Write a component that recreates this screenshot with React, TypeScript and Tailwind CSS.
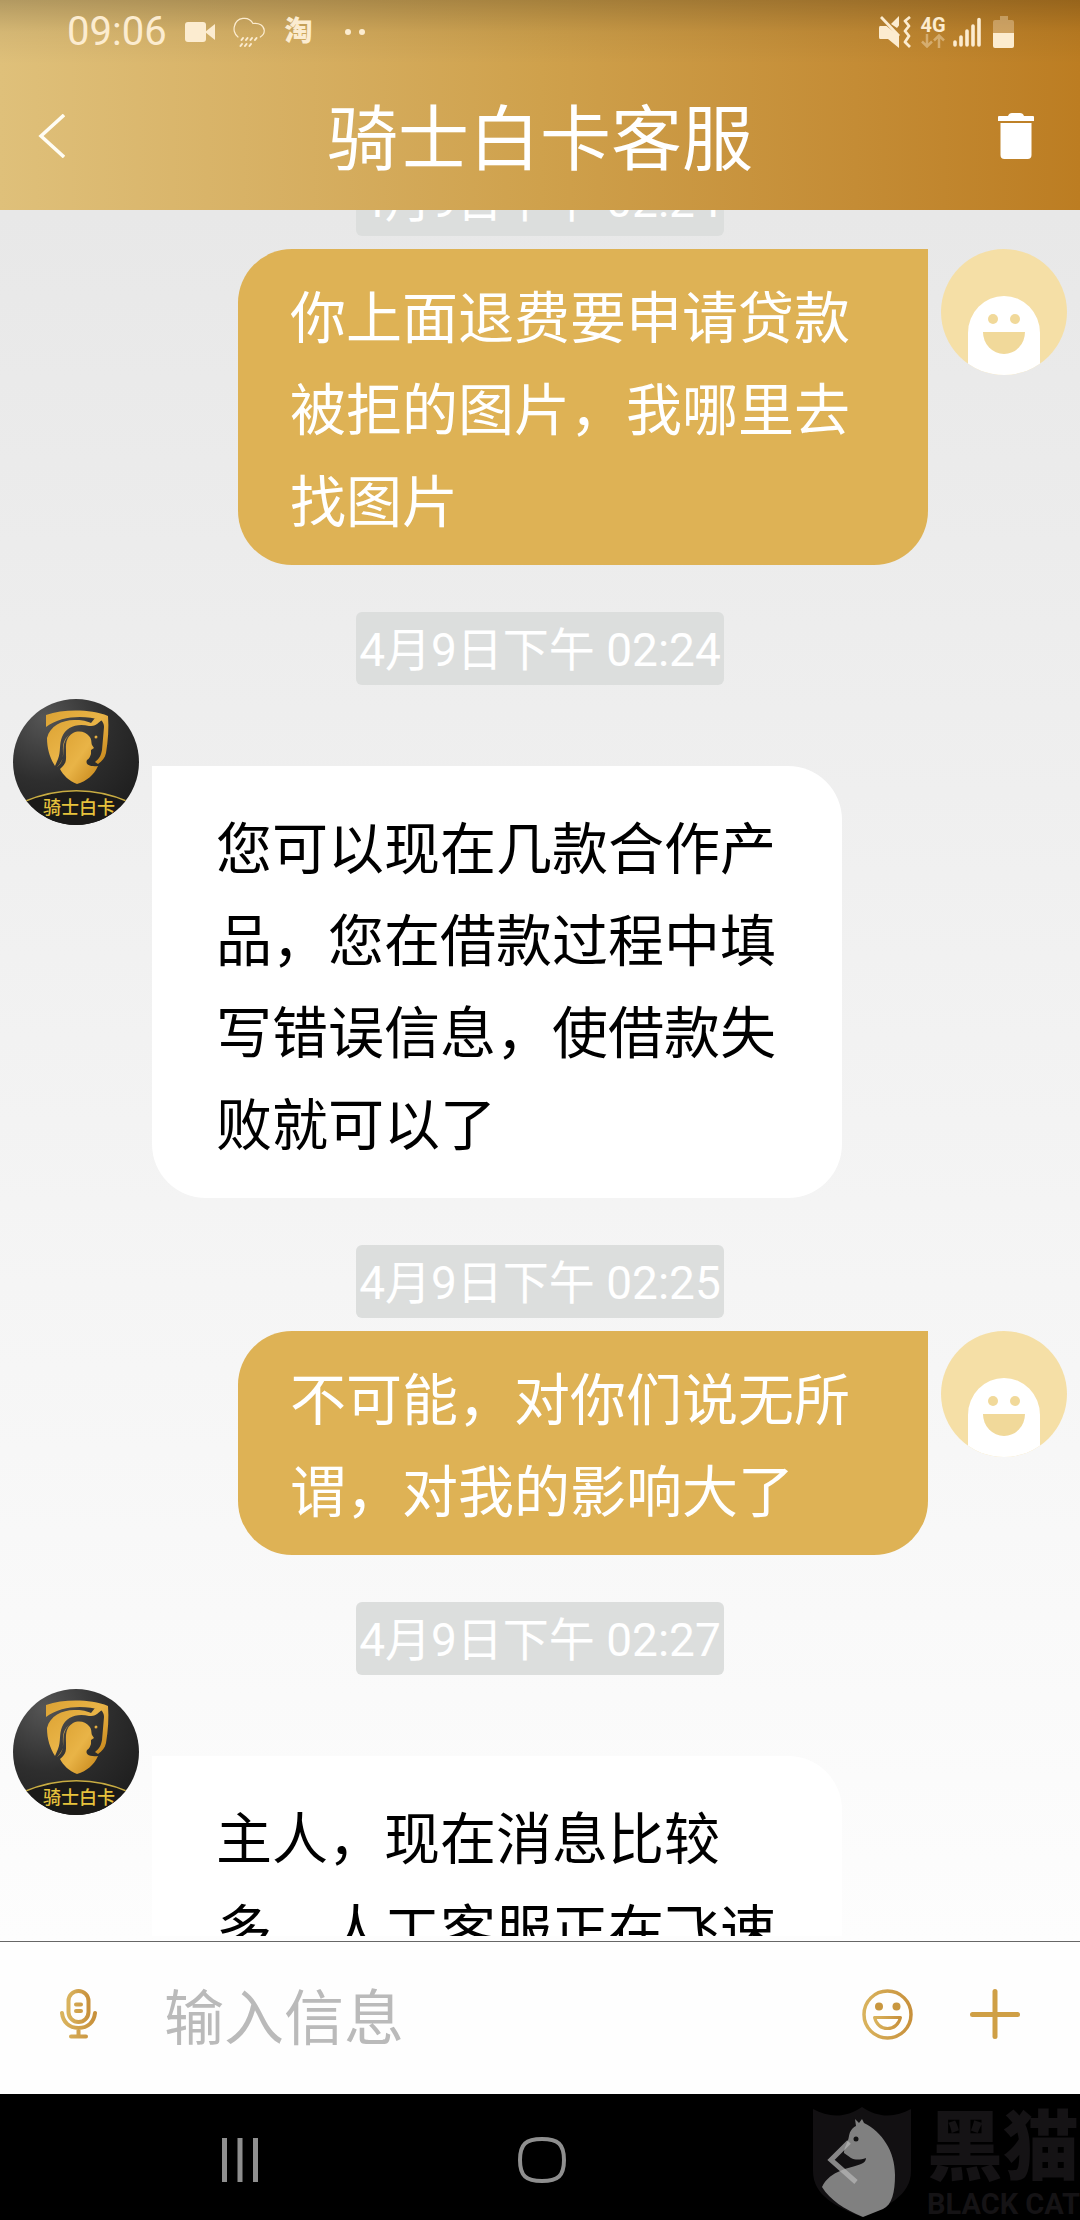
import React from 'react';

type Message = {
  id: number;
  from: 'agent' | 'user';
  time: string;
  text: string;
};

const messages: Message[] = [
  { id: 1, from: 'user', time: '4月9日下午 02:24', text: '你上面退费要申请贷款被拒的图片，我哪里去找图片' },
  { id: 2, from: 'agent', time: '4月9日下午 02:24', text: '您可以现在几款合作产品，您在借款过程中填写错误信息，使借款失败就可以了' },
  { id: 3, from: 'user', time: '4月9日下午 02:25', text: '不可能，对你们说无所谓，对我的影响大了' },
  { id: 4, from: 'agent', time: '4月9日下午 02:27', text: '主人，现在消息比较多，人工客服正在飞速' },
];

const StatusBar = () => (
  <div className="flex h-16 items-center justify-between bg-linear-to-b from-black/20 via-black/5 to-transparent pr-[66px] pl-[67px] text-[#fcecd0]">
    <div className="flex items-center">
      <span className="text-[40px] leading-10">09:06</span>
      <svg className="ml-[18px] w-[30px]" viewBox="0 0 30 20" fill="currentColor">
        <rect width="21" height="20" rx="3" />
        <path d="M20 10 30 2v16z" />
      </svg>
      <svg className="ml-[18px] w-8" viewBox="0 0 32 31" fill="none" stroke="currentColor" strokeLinecap="round">
        <path d="M5 20C1 17 .5 12 1.500 9A10 10 0 0 1 20 6.500c6-1 11 2 11.300 7 0 3-1.500 5-4 6.500" strokeWidth="1.200" />
        <path d="m10 21-1.500 2m6-2L13 23m6-2-1.500 2m6-2L22 23M9 27l-1.500 2m6-2L12 29m6-2-1.500 2" strokeWidth="2" />
      </svg>
      <span className="ml-5 text-[28px] leading-8 font-black">淘</span>
      <svg className="ml-8 w-5" viewBox="0 0 20 6" fill="currentColor">
        <circle cx="3" cy="3" r="3" />
        <circle cx="17" cy="3" r="3" />
      </svg>
    </div>
    <div className="flex items-center">
      <svg className="w-8" viewBox="0 0 32 32" fill="currentColor">
        <path d="M1 10h6.500L20 20v12L9 23H1q-1 0-1-2v-9q0-2 1-2zM12 8l8-8v9.500L18 12z" />
        <path d="m2 1 18 19" fill="none" stroke="currentColor" strokeWidth="2.800" />
        <path d="m31 1-5 4 4 5-4 5 4 5-4 6 5 5" fill="none" stroke="currentColor" strokeWidth="2.800" strokeLinejoin="round" />
      </svg>
      <div className="ml-[10px] flex w-6 flex-col items-center">
        <span className="text-[20px] leading-[18px] font-bold">4G</span>
        <svg className="w-6 opacity-40" viewBox="0 0 24 14" fill="none" stroke="currentColor" strokeWidth="2.500">
          <path d="M6 0v12M1 7.500l5 5 5-5M18 14V2M13 6.500l5-5 5 5" />
        </svg>
      </div>
      <svg className="ml-2 w-7" viewBox="0 0 28 30" stroke="currentColor" strokeWidth="3.600" strokeLinecap="round">
        <path d="M2 25v3M8 20v8M14 14v14M20 9v19M26 2.500V28" />
      </svg>
      <svg className="ml-3 w-[21px]" viewBox="0 0 21 32" fill="currentColor">
        <path d="M7 0h8v4h4q2 0 2 2v11H0V6q0-2 2-2h5z" opacity=".35" />
        <path d="M0 17h21v13q0 2-2 2H2q-2 0-2-2z" />
      </svg>
    </div>
  </div>
);

const Header = () => (
  <header className="shrink-0 bg-linear-to-r from-[#dfc07a] via-[#cfa14c] to-[#bc7d22]">
    <StatusBar />
    <div className="flex h-[146px] items-center justify-between pr-[46px] pb-[2px] pl-[38px]">
      <button aria-label="返回" className="w-11">
        <svg className="w-[27px]" viewBox="0 0 27 44" fill="none" stroke="#fffdf4" strokeWidth="3.500">
          <path d="M26 1 3 22l23 21" />
        </svg>
      </button>
      <h1 className="pt-2 text-[71px] leading-[84px] text-white">骑士白卡客服</h1>
      <button aria-label="清空消息" className="w-9">
        <svg className="w-9" viewBox="0 0 36 46" fill="white">
          <path d="M1 3h9q1-3 4-3h8q3 0 4 3h9q1 0 1 1v4H0V4q0-1 1-1zM2.500 10h31v32q0 4-4 4h-23q-4 0-4-4z" />
        </svg>
      </button>
    </div>
  </header>
);

const AgentAvatar = () => (
  <svg className="w-[126px] shrink-0" viewBox="0 0 126 126" role="img" aria-label="骑士白卡">
    <defs>
      <radialGradient id="dark" cx=".25" cy=".15" r="1">
        <stop offset="0" stopColor="#555" />
        <stop offset=".5" stopColor="#2e2e2e" />
        <stop offset="1" stopColor="#1c1c1c" />
      </radialGradient>
      <linearGradient id="gold" x1="0" y1="0" x2="1" y2="1">
        <stop offset="0" stopColor="#dca233" />
        <stop offset=".5" stopColor="#e9b447" />
        <stop offset="1" stopColor="#c58418" />
      </linearGradient>
      <clipPath id="round"><circle cx="63" cy="63" r="63" /></clipPath>
    </defs>
    <g clipPath="url(#round)">
      <rect width="126" height="126" fill="url(#dark)" />
      <g fill="url(#gold)">
        <path d="M33 28V16c18-6 44-6 62 1 1 12 0 25-2 37-1 5-4 8-8 11l-3-2c5-4 6-7 7-12l2-23c0-3-1-5-3-7-18-5-40-4-55 7z" />
        <path d="M34 39c3-13 17-19 30-18 6 0 9 1 14 3l4-5 8 1-6 5c-3 2-5 2-8 2-12-3-23 1-27 11-3 7-1 15-4 22l-3 7c-5-8-8-17-8-28z" />
        <path d="M60 34c6-3 13-1 16 3 3 3 2 6 3 9l2 3-3 2v4c-1 3-2 5-4 6-2 4 2 7 11 6-4 9-11 15-21 18-8-3-14-9-17-15 7-6 6-9 6-16 0-8-1-15 7-20z" />
        <path d="M44 68c9-9 5-14 7-23 1-4 3-7 5-9-7 6-6 13-6 19s-2 10-6 13z" />
        <circle cx="83" cy="38" r="1.500" />
      </g>
      <path d="M10 103C45 88 82 88 116 103V126H10z" fill="#1b1a18" />
      <path d="M10 103C45 88 82 88 116 103" fill="none" stroke="#c8ac42" strokeWidth="1.500" />
      <text x="66" y="115" textAnchor="middle" fontSize="18" fontWeight="500" fill="#e6c23c">骑士白卡</text>
    </g>
  </svg>
);

const UserAvatar = () => (
  <svg className="w-[126px] shrink-0" viewBox="0 0 126 126" role="img" aria-label="我">
    <clipPath id="me"><circle cx="63" cy="63" r="63" /></clipPath>
    <g clipPath="url(#me)">
      <rect width="126" height="126" fill="#f5dfa6" />
      <path d="M27 126V84a36 37 0 0 1 72 0v42z" fill="#fff" />
      <g fill="#f1d99a">
        <circle cx="52" cy="70" r="5" />
        <circle cx="74" cy="70" r="5" />
        <path d="M42 83h42a21 22 0 0 1-42 0z" />
      </g>
    </g>
  </svg>
);

const MessageItem = ({ message }: { message: Message }) => (
  <li className="pb-[47px]">
    <div className="flex justify-center">
      <time className="rounded-md bg-[#dcdedd] px-[3px] pt-1 text-[46px] leading-[69px] text-white">{message.time}</time>
    </div>
    {message.from === 'user' ? (
      <div className="mt-[13px] flex items-start justify-end gap-[13px] px-[13px]">
        <p className="w-[690px] rounded-[54px] rounded-tr-none bg-[#deb255] pt-6 pr-16 pb-4 pl-[52px] text-[56px] leading-[92px] text-white">
          {message.text}
        </p>
        <UserAvatar />
      </div>
    ) : (
      <div className="mt-[14px] flex items-start gap-[13px] px-[13px]">
        <AgentAvatar />
        <p className="mt-[67px] w-[690px] rounded-[54px] rounded-tl-none bg-white pt-[38px] pr-16 pb-[26px] pl-16 text-[56px] leading-[92px] text-black">
          {message.text}
        </p>
      </div>
    )}
  </li>
);

const InputBar = () => (
  <form className="flex h-[153px] shrink-0 items-center border-t border-[#666] bg-[#fefefe] px-[60px] pb-2">
    <svg className="absolute size-0">
      <linearGradient id="stroke" x1="0" y1="0" x2="1" y2="0">
        <stop offset="0" stopColor="#d9b35d" />
        <stop offset="1" stopColor="#c8913c" />
      </linearGradient>
    </svg>
    <button type="button" aria-label="语音">
      <svg className="w-[37px]" viewBox="0 0 37 50" fill="none" stroke="url(#stroke)" strokeWidth="4" strokeLinecap="round">
        <rect x="8.500" y="2" width="20" height="31" rx="10" />
        <path d="M2 24c1 9 7 15 16.500 15S34 33 35 24M18.500 39v7M11 47.500h15M16 15.500h5M16 22h5" />
      </svg>
    </button>
    <input
      aria-label="输入信息"
      placeholder="输入信息"
      className="ml-[67px] h-24 min-w-0 flex-1 bg-transparent pt-[10px] text-[60px] text-black outline-none placeholder:text-[#bababa]"
    />
    <button type="button" aria-label="表情">
      <svg className="w-[51px]" viewBox="0 0 51 51" fill="none" stroke="url(#stroke)" strokeWidth="3.500">
        <circle cx="25.500" cy="25.500" r="23.500" />
        <path d="M12.500 28.500h26c-2 7-7 11-13 11s-11-4-13-11z" strokeLinejoin="round" strokeWidth="3" />
        <circle cx="17" cy="17.500" r="4" fill="#c9973f" stroke="none" />
        <circle cx="34.500" cy="17.500" r="4" fill="#c9973f" stroke="none" />
      </svg>
    </button>
    <button type="button" aria-label="更多" className="ml-[57px]">
      <svg className="w-[50px]" viewBox="0 0 50 50" fill="#cf9f45">
        <rect y="23" width="50" height="5" rx="2.500" />
        <rect x="22.500" width="5" height="50" rx="2.500" />
      </svg>
    </button>
  </form>
);

const Watermark = () => (
  <div className="pointer-events-none absolute top-3 right-0 flex gap-4 text-[#151315]">
    <svg className="w-[98px]" viewBox="0 0 98 110">
      <path d="M0 2c16 9 33 9 49-2 16 11 33 11 49 2v62c0 25-25 36-49 46C24 100 0 89 0 64z" fill="#121012" />
      <path d="m42 12 4 4 3-4 2 4c18 9 31 28 31 52 0 17-3 30-12 34l-20 8C31 102 17 93 9 80c8-17 29-19 39-23 3-1 5-3 5-6-6 2-11 2-15 0l-7-5c0-6 4-10 5-17 1-5 3-8 7-10z" fill="#808080" />
      <path d="m36 35-18 18 25 22" fill="none" stroke="#b9b9b9" strokeWidth="5" opacity=".7" />
      <circle cx="43" cy="32" r="2.500" fill="#111" />
    </svg>
    <div className="flex flex-col">
      <span className="text-[76px] leading-[84px] font-black">黑猫</span>
      <span className="text-[29px] leading-7 font-bold">BLACK CAT</span>
    </div>
  </div>
);

const NavBar = () => (
  <nav className="relative flex h-[126px] shrink-0 items-center overflow-hidden bg-black pt-[6px]">
    <div className="grid flex-1 grid-cols-[480px_1fr] items-center">
      <button aria-label="最近任务" className="flex justify-center">
        <svg className="w-9" viewBox="0 0 36 44" fill="#8f8f8f">
          <path d="M0 0h5v44H0zM15.500 0h5v44h-5zM31 0h5v44h-5z" />
        </svg>
      </button>
      <button aria-label="主屏幕" className="flex pl-[38px]">
        <svg className="w-[48px]" viewBox="0 0 48 46" fill="none" stroke="#8f8f8f" strokeWidth="4">
          <path d="M24 2c16 0 22 5 22 21s-6 21-22 21S2 39 2 23 8 2 24 2z" />
        </svg>
      </button>
    </div>
    <Watermark />
  </nav>
);

export default function App() {
  return (
    <div className="flex h-screen flex-col overflow-hidden bg-[#fcfcfc] font-[Roboto,'Noto_Sans_CJK_SC',sans-serif]">
      <Header />
      <main className="min-h-0 flex-1 bg-linear-to-b from-[#e8e8e8] to-[#fdfdfd] pb-[5px]">
        <div className="h-full overflow-hidden">
          <ol className="-mt-[47px]">
            {messages.map((message) => (
              <MessageItem key={message.id} message={message} />
            ))}
          </ol>
        </div>
      </main>
      <InputBar />
      <NavBar />
    </div>
  );
}
